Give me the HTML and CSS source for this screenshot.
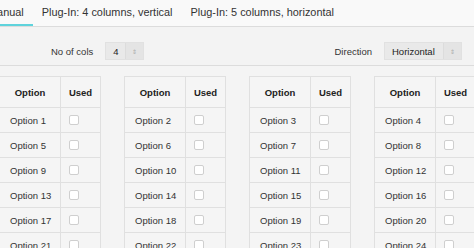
FILE: index.html
```html
<!DOCTYPE html>
<html>
<head>
<meta charset="utf-8">
<link rel="stylesheet" href="styles.css">
</head>
<body>
<div class="tabs">
  <div class="tab active">Manual</div>
  <div class="tab">Plug-In: 4 columns, vertical</div>
  <div class="tab">Plug-In: 5 columns, horizontal</div>
</div>
<div class="toolbar">
  <div class="field">
    <span class="label">No of cols</span>
    <div class="select small"><span class="val">4</span><span class="arrow">&#8661;</span></div>
  </div>
  <div class="field">
    <span class="label">Direction</span>
    <div class="select wide"><span class="val">Horizontal</span><span class="arrow">&#8661;</span></div>
  </div>
</div>
<div class="grid">
  <table class="opts">
    <colgroup><col class="c1"><col class="c2"></colgroup>
    <tr><th>Option</th><th>Used</th></tr>
    <tr><td>Option 1</td><td><span class="cb"></span></td></tr>
    <tr><td>Option 5</td><td><span class="cb"></span></td></tr>
    <tr><td>Option 9</td><td><span class="cb"></span></td></tr>
    <tr><td>Option 13</td><td><span class="cb"></span></td></tr>
    <tr><td>Option 17</td><td><span class="cb"></span></td></tr>
    <tr><td>Option 21</td><td><span class="cb"></span></td></tr>
  </table>
  <table class="opts">
    <colgroup><col class="c1"><col class="c2"></colgroup>
    <tr><th>Option</th><th>Used</th></tr>
    <tr><td>Option 2</td><td><span class="cb"></span></td></tr>
    <tr><td>Option 6</td><td><span class="cb"></span></td></tr>
    <tr><td>Option 10</td><td><span class="cb"></span></td></tr>
    <tr><td>Option 14</td><td><span class="cb"></span></td></tr>
    <tr><td>Option 18</td><td><span class="cb"></span></td></tr>
    <tr><td>Option 22</td><td><span class="cb"></span></td></tr>
  </table>
  <table class="opts">
    <colgroup><col class="c1"><col class="c2"></colgroup>
    <tr><th>Option</th><th>Used</th></tr>
    <tr><td>Option 3</td><td><span class="cb"></span></td></tr>
    <tr><td>Option 7</td><td><span class="cb"></span></td></tr>
    <tr><td>Option 11</td><td><span class="cb"></span></td></tr>
    <tr><td>Option 15</td><td><span class="cb"></span></td></tr>
    <tr><td>Option 19</td><td><span class="cb"></span></td></tr>
    <tr><td>Option 23</td><td><span class="cb"></span></td></tr>
  </table>
  <table class="opts">
    <colgroup><col class="c1"><col class="c2"></colgroup>
    <tr><th>Option</th><th>Used</th></tr>
    <tr><td>Option 4</td><td><span class="cb"></span></td></tr>
    <tr><td>Option 8</td><td><span class="cb"></span></td></tr>
    <tr><td>Option 12</td><td><span class="cb"></span></td></tr>
    <tr><td>Option 16</td><td><span class="cb"></span></td></tr>
    <tr><td>Option 20</td><td><span class="cb"></span></td></tr>
    <tr><td>Option 24</td><td><span class="cb"></span></td></tr>
  </table>
</div>
</body>
</html>
```
FILE: styles.css
```css
html, body {
  margin: 0;
  padding: 0;
  width: 474px;
  height: 248px;
  overflow: hidden;
  background: #f4f4f4;
  font-family: "Liberation Sans", Arial, sans-serif;
  color: #333;
}
.tabs {
  display: flex;
  height: 26px;
  background: #f9f9f9;
  border-bottom: 1px solid #dcdcdc;
  margin-left: -21px;
  width: 520px;
}
.tab {
  padding: 0 9px;
  font-size: 10.9px;
  line-height: 24px;
  height: 24px;
  color: #333;
  white-space: nowrap;
  border-bottom: 2px solid transparent;
}
.tab.active {
  border-bottom-color: #5fd3dc;
}
.toolbar {
  display: flex;
  justify-content: space-between;
  align-items: center;
  padding: 15px 12px 5px 51px;
  border-bottom: 1px solid #dcdcdc;
  background: #f3f3f3;
}
.field {
  display: flex;
  align-items: center;
  gap: 12px;
}
.label {
  font-size: 9.5px;
  color: #333;
}
.select {
  display: flex;
  height: 18px;
  background: #e9e9e9;
  border: 1px solid #e1e1e1;
  box-sizing: border-box;
  font-size: 9.5px;
  color: #222;
}
.select .val {
  display: flex;
  align-items: center;
  padding-left: 7px;
  flex: 1;
  border-right: 1px solid #dcdcdc;
}
.select .arrow {
  display: flex;
  align-items: center;
  justify-content: center;
  width: 17px;
  background: #e4e4e4;
  color: #aaa;
  font-size: 6px;
}
.select.small { width: 39px; }
.select.wide { width: 78px; }
.grid {
  display: flex;
  gap: 23px;
  margin-left: -1px;
  margin-top: 10px;
}
.opts {
  border-collapse: collapse;
  table-layout: fixed;
  width: 101px;
  flex: none;
  font-size: 9.5px;
  background: #f5f5f5;
}
.opts col.c1 { width: 61px; }
.opts col.c2 { width: 40px; }
.opts th, .opts td {
  border: 1px solid #e0e0e0;
  padding: 0;
  white-space: nowrap;
  overflow: hidden;
}
.opts th {
  height: 30px;
  font-weight: bold;
  color: #222;
  text-align: center;
}
.opts td {
  height: 24px;
  text-align: left;
  padding-left: 10px;
  color: #333;
}
.opts td + td {
  padding-left: 8px;
}
.cb {
  display: block;
  width: 8px;
  height: 8px;
  background: #fff;
  border: 1px solid #cfcfcf;
  border-radius: 2px;
}
```
